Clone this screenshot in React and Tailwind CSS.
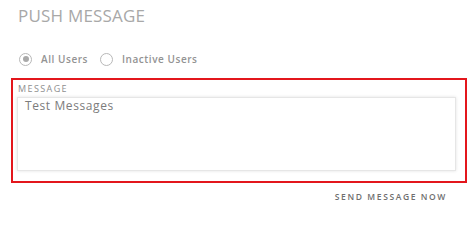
import React, { useState } from 'react';

const Radio = ({ checked, label, onClick }) => (
    <label onClick={onClick} className="flex items-center gap-[9px] cursor-pointer">
        <span className="w-[13px] h-[13px] rounded-full border border-[#b8b8b8] flex items-center justify-center bg-white">
            {checked && <span className="w-[6px] h-[6px] rounded-full bg-[#a9a9a9]" />}
        </span>
        <span className="text-[10px] font-semibold tracking-[0.55px] text-[#939393]">{label}</span>
    </label>
);

export default function App() {
    const [target, setTarget] = useState('all');
    const [message, setMessage] = useState('Test Messages');

    return (
        <div className="w-[474px] h-[226px] bg-white font-['Open_Sans',sans-serif] overflow-hidden">
            <div className="pt-[3px] pl-[18px]">
                <h1 className="text-[17px] leading-[26px] text-[#a8a8a8] tracking-[0.2px]">PUSH MESSAGE</h1>
            </div>

            {/* Target audience */}
            <div className="flex items-center gap-[12px] pl-[19px] mt-[22px] h-[16px]">
                <Radio checked={target === 'all'} label="All Users" onClick={() => setTarget('all')} />
                <Radio checked={target === 'inactive'} label="Inactive Users" onClick={() => setTarget('inactive')} />
            </div>

            {/* Message box */}
            <div className="ml-[11px] mt-[11px] w-[456px] h-[105px] border-2 border-[#e3161c] pl-[4px] pr-[8px] pt-[3px]">
                <div className="pl-[1px] text-[9px] leading-[12px] tracking-[1.4px] text-[#8e8e8e]">MESSAGE</div>
                <textarea
                    value={message}
                    onChange={(e) => setMessage(e.target.value)}
                    className="mt-[2px] block w-[439px] h-[74px] resize-none border border-[#e6e6e6] shadow-[0_0_3px_rgba(0,0,0,0.12)] px-[7px] py-0 text-[12px] leading-[15px] tracking-[0.6px] text-[#7c7c7c] outline-none"
                />
            </div>

            <div className="flex justify-end pr-[27px] mt-[8px]">
                <button className="text-[8.5px] font-semibold tracking-[1.6px] text-[#6f6f6f]">SEND MESSAGE NOW</button>
            </div>
        </div>
    );
}
